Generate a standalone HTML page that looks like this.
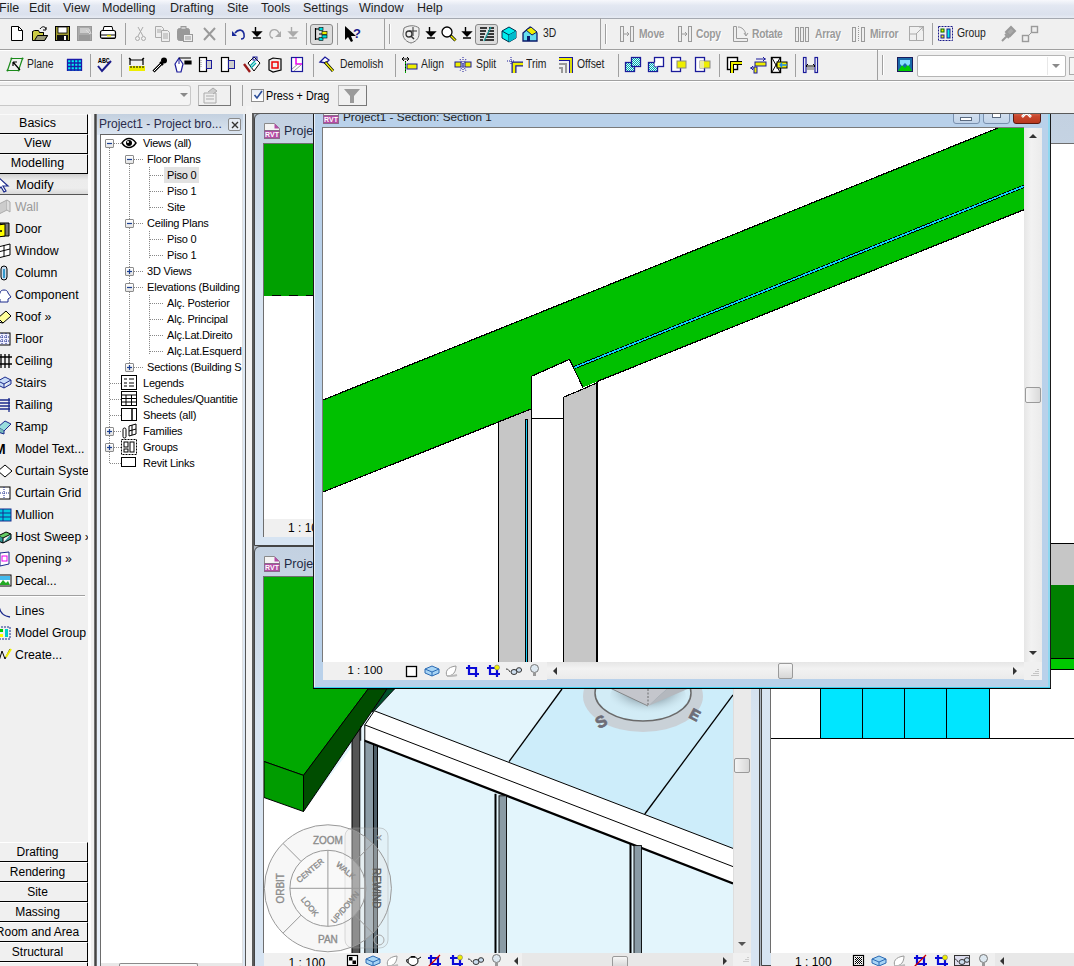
<!DOCTYPE html>
<html><head><meta charset="utf-8">
<style>
*{margin:0;padding:0;box-sizing:border-box}
html,body{width:1074px;height:966px;overflow:hidden;background:#f0f0f0;font-family:"Liberation Sans",sans-serif;font-size:12px;color:#000}
.a{position:absolute}
.t{position:absolute;white-space:nowrap;line-height:1}
svg{overflow:visible}
</style></head><body>
<div class="a" style="left:0px;top:0px;width:1074px;height:18px;background:linear-gradient(#f7f8fc,#e3e8f2 30%,#dbe1ed 80%,#e6eaf3)"></div>
<div class="a" style="left:0px;top:18px;width:1074px;height:1px;background:#a4a8b0"></div>
<div class="t" style="left:-1px;top:1.92px;font-size:12.5px;color:#1e1e1e;">File</div>
<div class="t" style="left:29px;top:1.92px;font-size:12.5px;color:#1e1e1e;">Edit</div>
<div class="t" style="left:63px;top:1.92px;font-size:12.5px;color:#1e1e1e;">View</div>
<div class="t" style="left:102px;top:1.92px;font-size:12.5px;color:#1e1e1e;">Modelling</div>
<div class="t" style="left:170px;top:1.92px;font-size:12.5px;color:#1e1e1e;">Drafting</div>
<div class="t" style="left:227px;top:1.92px;font-size:12.5px;color:#1e1e1e;">Site</div>
<div class="t" style="left:261px;top:1.92px;font-size:12.5px;color:#1e1e1e;">Tools</div>
<div class="t" style="left:303px;top:1.92px;font-size:12.5px;color:#1e1e1e;">Settings</div>
<div class="t" style="left:359px;top:1.92px;font-size:12.5px;color:#1e1e1e;">Window</div>
<div class="t" style="left:417px;top:1.92px;font-size:12.5px;color:#1e1e1e;">Help</div>
<div class="a" style="left:0px;top:19px;width:1074px;height:30px;background:#f0f0f0"></div>
<div class="a" style="left:0px;top:49px;width:1074px;height:1px;background:#a0a0a0"></div>
<div class="a" style="left:0px;top:50px;width:1074px;height:1px;background:#fff"></div>
<div class="a" style="left:0px;top:80px;width:1074px;height:1px;background:#a0a0a0"></div>
<div class="a" style="left:0px;top:81px;width:1074px;height:1px;background:#fff"></div>
<div class="a" style="left:125px;top:23px;width:1px;height:22px;background:#a0a0a0"></div>
<div class="a" style="left:225px;top:23px;width:1px;height:22px;background:#a0a0a0"></div>
<div class="a" style="left:306px;top:23px;width:1px;height:22px;background:#a0a0a0"></div>
<div class="a" style="left:337px;top:23px;width:1px;height:22px;background:#a0a0a0"></div>
<div class="a" style="left:384px;top:18px;width:1px;height:31px;background:#a0a0a0"></div>
<div class="a" style="left:389px;top:24px;width:1px;height:20px;background:#a0a0a0"></div>
<div class="a" style="left:390px;top:24px;width:1px;height:20px;background:#fff"></div>
<div class="a" style="left:600px;top:18px;width:1px;height:31px;background:#a0a0a0"></div>
<div class="a" style="left:605px;top:24px;width:1px;height:20px;background:#a0a0a0"></div>
<div class="a" style="left:606px;top:24px;width:1px;height:20px;background:#fff"></div>
<div class="a" style="left:932px;top:23px;width:1px;height:22px;background:#a0a0a0"></div>
<div class="a" style="left:90px;top:54px;width:1px;height:23px;background:#a0a0a0"></div>
<div class="a" style="left:121px;top:54px;width:1px;height:23px;background:#a0a0a0"></div>
<div class="a" style="left:313px;top:54px;width:1px;height:23px;background:#a0a0a0"></div>
<div class="a" style="left:395px;top:54px;width:1px;height:23px;background:#a0a0a0"></div>
<div class="a" style="left:618px;top:54px;width:1px;height:23px;background:#a0a0a0"></div>
<div class="a" style="left:719px;top:54px;width:1px;height:23px;background:#a0a0a0"></div>
<div class="a" style="left:795px;top:54px;width:1px;height:23px;background:#a0a0a0"></div>
<div class="a" style="left:877px;top:50px;width:1px;height:30px;background:#a0a0a0"></div>
<div class="a" style="left:882px;top:55px;width:1px;height:20px;background:#a0a0a0"></div>
<div class="a" style="left:883px;top:55px;width:1px;height:20px;background:#fff"></div>
<div class="a" style="left:0px;top:85px;width:191px;height:21px;background:#f4f4f4;border:1px solid #c8c8c8;border-left:none;border-radius:0 3px 3px 0"></div>
<svg class="a" style="left:180px;top:93px;" width="8" height="5" viewBox="0 0 8 5"><path d="M0 0h8l-4 4z" fill="#8a8a8a"/></svg>
<div class="a" style="left:198px;top:85px;width:33px;height:22px;background:#f0f0f0;border:1px solid #b8b8b8;border-right-color:#777;border-bottom:2px solid #777"></div>
<div class="a" style="left:242px;top:85px;width:1px;height:21px;background:#a0a0a0"></div>
<div class="a" style="left:251px;top:89px;width:13px;height:13px;background:linear-gradient(#e6ecf5,#fff);border:1px solid #8f8f8f"></div>
<svg class="a" style="left:253px;top:90px;" width="10" height="10" viewBox="0 0 10 10"><path d="M1.5 5l2.5 3l5-7" stroke="#2a4d9a" stroke-width="1.6" fill="none"/></svg>
<div class="t" style="left:266px;top:89.84px;font-size:12px;color:#000;transform:scaleX(0.9);transform-origin:0 0">Press + Drag</div>
<div class="a" style="left:338px;top:85px;width:29px;height:22px;background:#f0f0f0;border:1px solid #b8b8b8;border-right-color:#777;border-bottom:2px solid #777"></div>
<svg class="a" style="left:344px;top:89px;" width="16" height="14" viewBox="0 0 16 14"><path d="M0 0h16l-6 7v7h-4v-7z" fill="#9a9a9a"/></svg>
<svg class="a" style="left:11px;top:26px;" width="16" height="16" viewBox="0 0 16 16"><path d="M0.5 0.5h7l4 4v10h-11z" fill="#fff" stroke="#000"/><path d="M7.5 0.5v4h4" fill="none" stroke="#000"/></svg>
<svg class="a" style="left:32px;top:26px;" width="16" height="16" viewBox="0 0 16 16"><path d="M0.5 5.5h5l1 1h5v3" fill="#ee6" stroke="#000"/><path d="M0.5 14.5v-9l2-1h4l1 2h4v3h4l-3 5z" fill="#cc4" stroke="#000"/><path d="M2.5 14.5l3-5h10l-3 5z" fill="#997" stroke="#000"/><path d="M8 3c2-3 5-3 6 0M14 1v3h-3" fill="none" stroke="#000"/></svg>
<svg class="a" style="left:55px;top:26px;" width="16" height="16" viewBox="0 0 16 16"><rect x="0.5" y="0.5" width="14" height="14" fill="#a09a30" stroke="#000"/><rect x="3" y="1" width="9" height="6" fill="#fff" stroke="#000" stroke-width="0.8"/><rect x="2" y="9" width="11" height="6" fill="#111"/><rect x="9" y="10" width="2" height="4" fill="#fff"/></svg>
<svg class="a" style="left:77px;top:26px;" width="16" height="16" viewBox="0 0 16 16"><rect x="0.5" y="0.5" width="14" height="14" fill="#aaa" stroke="#999"/><rect x="3" y="2" width="9" height="5" fill="#ccc"/><rect x="2" y="9" width="11" height="6" fill="#999"/><path d="M9 4l4 4M12 3l2 5" stroke="#ddd"/></svg>
<svg class="a" style="left:100px;top:26px;" width="16" height="16" viewBox="0 0 16 16"><path d="M4 0.5h8l1 4h-10z" fill="#fff" stroke="#000"/><rect x="0.5" y="4.5" width="15" height="8" rx="2" fill="#fff" stroke="#000" stroke-width="1.2"/><path d="M1 9h14M2 12h12" stroke="#000"/><rect x="7" y="9" width="4" height="1.5" fill="#dd0"/></svg>
<svg class="a" style="left:135px;top:26px;" width="12" height="16" viewBox="0 0 12 16"><circle cx="2.5" cy="12.5" r="2" fill="none" stroke="#aaa"/><circle cx="8.5" cy="12.5" r="2" fill="none" stroke="#aaa"/><path d="M3 10l5-9M8 10l-5-9" stroke="#aaa"/></svg>
<svg class="a" style="left:155px;top:26px;" width="16" height="16" viewBox="0 0 16 16"><path d="M0.5 0.5h6l2 2v9h-8z" fill="#eee" stroke="#aaa"/><path d="M6.5 4.5h6l2 2v9h-8z" fill="#eee" stroke="#aaa"/><path d="M2 4h4M2 6h4M8 8h5M8 10h5M8 12h5" stroke="#aaa"/></svg>
<svg class="a" style="left:177px;top:26px;" width="16" height="16" viewBox="0 0 16 16"><rect x="0.5" y="2.5" width="12" height="12" rx="2" fill="#999" stroke="#999"/><rect x="4" y="0.5" width="5" height="3" fill="#ccc" stroke="#999"/><rect x="6.5" y="8.5" width="9" height="7" fill="#eee" stroke="#999"/><path d="M8 11h6M8 13h6" stroke="#999"/></svg>
<svg class="a" style="left:203px;top:27px;" width="13" height="14" viewBox="0 0 13 14"><path d="M1 13L12 1M1 1l11 12" stroke="#9a9a9a" stroke-width="2"/></svg>
<svg class="a" style="left:232px;top:28px;" width="14" height="12" viewBox="0 0 14 12"><path d="M3 5c3-4 8-4 9 1s-2 5-3 5" fill="none" stroke="#1a2a9a" stroke-width="1.6"/><path d="M0 3l5 5H0z" fill="#1a2a9a"/></svg>
<svg class="a" style="left:253px;top:27px;" width="8" height="13" viewBox="0 0 8 13"><path d="M2.5 0v6M0 5h8l-4 4z M0 11h8" stroke="#000" fill="#000" stroke-width="1.4"/></svg>
<svg class="a" style="left:269px;top:29px;" width="13" height="11" viewBox="0 0 13 11"><path d="M10 4C8-1 2 0 1 4s2 5 3 5" fill="none" stroke="#aaa" stroke-width="1.4"/><path d="M12 2v6H6z" fill="#aaa"/></svg>
<svg class="a" style="left:289px;top:27px;" width="8" height="13" viewBox="0 0 8 13"><path d="M2.5 0v6M0 5h8l-4 4z M0 11h8" stroke="#aaa" fill="#aaa" stroke-width="1.4"/></svg>
<div class="a" style="left:310px;top:24px;width:23px;height:21px;background:#dcdcdc;border:1px solid #888;border-radius:3px"></div>
<svg class="a" style="left:314px;top:27px;" width="14" height="14" viewBox="0 0 14 14"><path d="M1.5 1v12M1.5 2h4M1.5 12h4M5 7h3" stroke="#000" stroke-width="1.2"/><rect x="5" y="0.5" width="4" height="3" fill="#0dd" stroke="#000" stroke-width="0.6"/><rect x="5" y="10.5" width="4" height="3" fill="#0dd" stroke="#000" stroke-width="0.6"/><rect x="8" y="4.5" width="5" height="3" fill="#ee0" stroke="#000" stroke-width="0.6"/><rect x="8" y="8" width="5" height="3" fill="#0dd" stroke="#000" stroke-width="0.6"/></svg>
<svg class="a" style="left:345px;top:26px;" width="16" height="16" viewBox="0 0 16 16"><path d="M0 0v14l3-3 3 5 2-1-2-5h5z" fill="#000"/><text x="8" y="12" font-size="13" font-weight="bold" fill="#1a1a8a" font-family="Liberation Sans">?</text></svg>
<svg class="a" style="left:403px;top:25px;" width="17" height="18" viewBox="0 0 17 18"><path d="M1 3c5-3 11-3 15 0v6c0 5-4 8-8 9c-4-1-8-4-8-9z" fill="#eee" stroke="#777"/><circle cx="6" cy="9" r="3" fill="none" stroke="#333" stroke-width="1.3"/><path d="M8 11l3 3" stroke="#333" stroke-width="1.5"/><path d="M10 2v9M6 6h8" stroke="#333"/></svg>
<svg class="a" style="left:427px;top:27px;" width="8" height="13" viewBox="0 0 8 13"><path d="M2.5 0v6M0 5h8l-4 4z M0 11h8" stroke="#000" fill="#000" stroke-width="1.4"/></svg>
<svg class="a" style="left:441px;top:26px;" width="16" height="16" viewBox="0 0 16 16"><circle cx="6" cy="6" r="5" fill="#fff" stroke="#000" stroke-width="1.3"/><path d="M9.5 9.5l5 5" stroke="#000" stroke-width="3"/><path d="M10 10l4.5 4.5" stroke="#ee0" stroke-width="1.5"/></svg>
<svg class="a" style="left:463px;top:27px;" width="8" height="13" viewBox="0 0 8 13"><path d="M2.5 0v6M0 5h8l-4 4z M0 11h8" stroke="#000" fill="#000" stroke-width="1.4"/></svg>
<div class="a" style="left:475px;top:24px;width:23px;height:21px;background:#dcdcdc;border:1px solid #888;border-radius:3px"></div>
<svg class="a" style="left:480px;top:27px;" width="14" height="14" viewBox="0 0 14 14"><path d="M0 1h7M0 4h6M0 7h5M0 10h4M0 13h3M9 1h5M8 4h6M7 7h7M6 10h8M5 13h9" stroke="#000" stroke-width="1.5"/><path d="M11 0L4 14" stroke="#1a9a9a" stroke-width="1.3"/></svg>
<svg class="a" style="left:501px;top:26px;" width="16" height="16" viewBox="0 0 16 16"><path d="M1 5l7-4 7 4v7l-7 4-7-4z" fill="#0ee" stroke="#002a4a"/><path d="M1 5l7 4 7-4M8 9v7" stroke="#002a4a" fill="none"/><path d="M8 9l7-4v7l-7 4z" fill="#0bc"/></svg>
<svg class="a" style="left:522px;top:26px;" width="16" height="16" viewBox="0 0 16 16"><path d="M8 1l7 6v8H1V7z" fill="#6de" stroke="#0a1a6a" stroke-width="1.3"/><path d="M4 4l5-3 6 5-5 3z" fill="#ee0" stroke="#0a1a6a"/><rect x="5" y="10" width="3" height="5" fill="#0a1a6a"/></svg>
<div class="t" style="left:543px;top:27.42px;font-size:12.5px;color:#1e1e1e;transform:scaleX(0.83);transform-origin:0 0">3D</div>
<svg class="a" style="left:620px;top:26px;" width="14" height="16" viewBox="0 0 14 16"><rect x="0.5" y="0.5" width="3" height="15" fill="#eee" stroke="#9a9a9a"/><rect x="10.5" y="0.5" width="3" height="15" fill="#eee" stroke="#9a9a9a"/><path d="M4 8h5M7 6l2 2-2 2" stroke="#9a9a9a" fill="none"/></svg>
<div class="t" style="left:639px;top:27.84px;font-size:12px;font-weight:bold;color:#9a9a9a;text-shadow:1px 1px 0 #fff;letter-spacing:-0.3px;transform:scaleX(0.86);transform-origin:0 0">Move</div>
<svg class="a" style="left:678px;top:26px;" width="14" height="16" viewBox="0 0 14 16"><rect x="0.5" y="0.5" width="3" height="15" fill="#eee" stroke="#9a9a9a"/><rect x="10.5" y="0.5" width="3" height="15" fill="#eee" stroke="#9a9a9a"/><path d="M4 8h5M7 6l2 2-2 2" stroke="#9a9a9a" fill="none"/></svg>
<div class="t" style="left:696px;top:27.84px;font-size:12px;font-weight:bold;color:#9a9a9a;text-shadow:1px 1px 0 #fff;letter-spacing:-0.3px;transform:scaleX(0.86);transform-origin:0 0">Copy</div>
<svg class="a" style="left:733px;top:26px;" width="16" height="16" viewBox="0 0 16 16"><path d="M0.5 0.5h3v12h11v3h-14z" fill="#eee" stroke="#9a9a9a"/><path d="M5 1c4 0 7 3 8 8M11 7l2 3 2-3" stroke="#9a9a9a" fill="none"/></svg>
<div class="t" style="left:752px;top:27.84px;font-size:12px;font-weight:bold;color:#9a9a9a;text-shadow:1px 1px 0 #fff;letter-spacing:-0.3px;transform:scaleX(0.86);transform-origin:0 0">Rotate</div>
<svg class="a" style="left:795px;top:26px;" width="15" height="16" viewBox="0 0 15 16"><rect x="0.5" y="1.5" width="3" height="14" fill="#eee" stroke="#9a9a9a"/><rect x="5.5" y="1.5" width="3" height="14" fill="#eee" stroke="#9a9a9a"/><rect x="10.5" y="1.5" width="3" height="14" fill="#eee" stroke="#9a9a9a"/></svg>
<div class="t" style="left:815px;top:27.84px;font-size:12px;font-weight:bold;color:#9a9a9a;text-shadow:1px 1px 0 #fff;letter-spacing:-0.3px;transform:scaleX(0.86);transform-origin:0 0">Array</div>
<svg class="a" style="left:852px;top:26px;" width="14" height="16" viewBox="0 0 14 16"><rect x="0.5" y="1.5" width="3" height="14" fill="#eee" stroke="#9a9a9a"/><rect x="9.5" y="1.5" width="3" height="14" fill="#eee" stroke="#9a9a9a"/><path d="M6.5 0v16" stroke="#9a9a9a" stroke-dasharray="1 1"/></svg>
<div class="t" style="left:870px;top:27.84px;font-size:12px;font-weight:bold;color:#9a9a9a;text-shadow:1px 1px 0 #fff;letter-spacing:-0.3px;transform:scaleX(0.86);transform-origin:0 0">Mirror</div>
<svg class="a" style="left:909px;top:26px;" width="16" height="16" viewBox="0 0 16 16"><rect x="0.5" y="0.5" width="14" height="14" fill="none" stroke="#aaa"/><path d="M0.5 8h7v7M7 8l7-7M10 1h4v4" stroke="#aaa" fill="none"/></svg>
<svg class="a" style="left:938px;top:26px;" width="16" height="16" viewBox="0 0 16 16"><rect x="0.5" y="0.5" width="14" height="14" fill="none" stroke="#1a1a8a" stroke-dasharray="2 1"/><rect x="3" y="3" width="3" height="3" fill="#ee0" stroke="#060"/><rect x="3" y="9" width="3" height="3" fill="#ee0" stroke="#1a1a8a"/><rect x="9" y="3" width="3" height="9" fill="#0ee" stroke="#1a1a8a"/></svg>
<div class="t" style="left:957px;top:27.42px;font-size:12.5px;color:#1e1e1e;transform:scaleX(0.83);transform-origin:0 0">Group</div>
<svg class="a" style="left:1001px;top:27px;" width="15" height="15" viewBox="0 0 15 15"><path d="M1 14l5-5M5 5l5-5 4 4-5 5zM4 7l4 4" stroke="#9a9a9a" stroke-width="2" fill="#aaa"/></svg>
<svg class="a" style="left:1022px;top:26px;" width="16" height="16" viewBox="0 0 16 16"><rect x="0.5" y="9.5" width="6" height="6" fill="#eee" stroke="#9a9a9a" stroke-width="1.4"/><rect x="9.5" y="0.5" width="6" height="6" fill="#eee" stroke="#9a9a9a" stroke-width="1.4"/><path d="M6 10l4-4" stroke="#9a9a9a"/></svg>
<svg class="a" style="left:7px;top:57px;" width="16" height="16" viewBox="0 0 16 16"><path d="M4.5 1.5h11l-4 12h-11z" fill="none" stroke="#1a8a1a" stroke-width="1.2"/><circle cx="4.5" cy="1.5" r="1" fill="#1a8a1a"/><circle cx="15.5" cy="1.5" r="1" fill="#1a8a1a"/><circle cx="11.5" cy="13.5" r="1" fill="#1a8a1a"/><circle cx="0.5" cy="13.5" r="1" fill="#1a8a1a"/><path d="M6 5l7 8M6 5v4M6 5h4" stroke="#000" stroke-width="1.2" fill="none"/></svg>
<div class="t" style="left:27px;top:58.42px;font-size:12.5px;color:#1e1e1e;transform:scaleX(0.83);transform-origin:0 0">Plane</div>
<svg class="a" style="left:67px;top:59px;" width="15" height="12" viewBox="0 0 15 12"><rect x="0" y="0" width="15" height="12" fill="#0ee"/><path d="M0.5 0v12M4 0v12M7.5 0v12M11 0v12M14.5 0v12M0 0.5h15M0 4h15M0 7.5h15M0 11h15" stroke="#1a1aaa" stroke-width="1.3"/></svg>
<svg class="a" style="left:97px;top:57px;" width="16" height="16" viewBox="0 0 16 16"><text x="1" y="6" font-size="6.5" font-weight="bold" font-family="Liberation Mono" fill="#000">ABC</text><path d="M1 9l4 5 9-10" stroke="#1a1a8a" stroke-width="2" fill="none"/></svg>
<svg class="a" style="left:129px;top:57px;" width="16" height="16" viewBox="0 0 16 16"><path d="M1 1v7M14 1v7M1 3h13M0 1l2 2M15 1l-2 2" stroke="#000" stroke-width="1.2"/><rect x="0" y="9" width="16" height="5" fill="#ee0"/><path d="M2 9v2M5 9v2M8 9v2M11 9v2M14 9v2" stroke="#000"/></svg>
<svg class="a" style="left:152px;top:57px;" width="16" height="16" viewBox="0 0 16 16"><path d="M1.5 14.5l9-9" stroke="#000" stroke-width="3"/><path d="M2 14l8.5-8.5" stroke="#fff" stroke-width="1"/><circle cx="12" cy="3.5" r="3" fill="#000"/><path d="M8 5l3 3" stroke="#000" stroke-width="2"/></svg>
<svg class="a" style="left:175px;top:57px;" width="16" height="16" viewBox="0 0 16 16"><path d="M4 1l4 6-2 8H2L0 7z" fill="#fff" stroke="#1a1a9a" stroke-width="1.2"/><path d="M4 1v6" stroke="#1a1a9a"/><path d="M4 1h12M10 4h6v3h-6z" stroke="#000" fill="#000" stroke-width="1.2"/></svg>
<svg class="a" style="left:199px;top:57px;" width="14" height="16" viewBox="0 0 14 16"><rect x="0.5" y="0.5" width="7" height="14" fill="#fff" stroke="#000" stroke-width="1.2"/><rect x="7.5" y="3.5" width="5" height="8" fill="#ccc" stroke="#1a1a9a"/><path d="M2 3v8" stroke="#888" stroke-dasharray="1 1"/></svg>
<svg class="a" style="left:221px;top:57px;" width="15" height="16" viewBox="0 0 15 16"><rect x="0.5" y="0.5" width="7" height="14" fill="#fff" stroke="#000" stroke-width="1.2"/><rect x="7.5" y="3.5" width="6" height="8" fill="#ccc" stroke="#1a1a9a"/></svg>
<svg class="a" style="left:244px;top:57px;" width="16" height="16" viewBox="0 0 16 16"><path d="M0 7l6 8" stroke="#9a1a1a" stroke-width="2.4"/><path d="M4 6l6-6 6 6-6 8z" fill="#fff" stroke="#000"/><path d="M6 9l5-5M7 11l5-5" stroke="#0aa" stroke-width="1.3"/><rect x="9" y="0" width="4" height="3" fill="none" stroke="#1a1a9a"/></svg>
<svg class="a" style="left:267px;top:57px;" width="15" height="16" viewBox="0 0 15 16"><path d="M2 3l4-2 8 1v11l-8 2-4-2z" fill="#eee" stroke="#000" stroke-width="1.2"/><rect x="5" y="5" width="6" height="6" fill="none" stroke="#e00" stroke-width="1.5"/></svg>
<svg class="a" style="left:291px;top:57px;" width="13" height="16" viewBox="0 0 13 16"><rect x="0.5" y="0.5" width="11" height="14" fill="#fff" stroke="#1a1a9a" stroke-width="1.2"/><path d="M5 1v6h6" stroke="#e0e" stroke-width="1.5" fill="none"/><path d="M1 12l6-5M3 14l7-6" stroke="#999"/></svg>
<svg class="a" style="left:319px;top:57px;" width="16" height="16" viewBox="0 0 16 16"><path d="M1 5l5-5 4 3-3 3z" fill="#fff" stroke="#1a1a9a" stroke-width="1.3"/><path d="M6 5l8 9" stroke="#000" stroke-width="3"/><path d="M6.5 5.5l7.5 8.5" stroke="#ee0" stroke-width="1.5"/></svg>
<div class="t" style="left:339.5px;top:58.42px;font-size:12.5px;color:#1e1e1e;transform:scaleX(0.83);transform-origin:0 0">Demolish</div>
<svg class="a" style="left:402px;top:57px;" width="16" height="16" viewBox="0 0 16 16"><path d="M0 2h7M2 0l-2 2 2 2M5 0l2 2-2 2M3.5 4v12" stroke="#000" fill="none"/><path d="M3.5 5v11" stroke="#0a0" stroke-dasharray="2 1"/><rect x="5" y="7" width="10" height="5" fill="#ee0" stroke="#1a1a9a"/></svg>
<div class="t" style="left:421px;top:58.42px;font-size:12.5px;color:#1e1e1e;transform:scaleX(0.83);transform-origin:0 0">Align</div>
<svg class="a" style="left:455px;top:57px;" width="16" height="16" viewBox="0 0 16 16"><rect x="0" y="5" width="6" height="5" fill="#ee0" stroke="#1a1a9a"/><rect x="10" y="5" width="6" height="5" fill="#ee0" stroke="#1a1a9a"/><path d="M8 0v16M5 2l6 12M11 2L5 14" stroke="#1a1a9a" stroke-dasharray="1 1"/></svg>
<div class="t" style="left:475.5px;top:58.42px;font-size:12.5px;color:#1e1e1e;transform:scaleX(0.83);transform-origin:0 0">Split</div>
<svg class="a" style="left:507px;top:57px;" width="16" height="16" viewBox="0 0 16 16"><path d="M0 4h8M4 0v8" stroke="#1a1a9a" stroke-dasharray="1 1"/><path d="M7 16V7h9" stroke="#1a1a9a" stroke-width="5" fill="none"/><path d="M7 16V7h9" stroke="#ee0" stroke-width="2.5" fill="none"/></svg>
<div class="t" style="left:526px;top:58.42px;font-size:12.5px;color:#1e1e1e;transform:scaleX(0.83);transform-origin:0 0">Trim</div>
<svg class="a" style="left:558px;top:57px;" width="15" height="16" viewBox="0 0 15 16"><path d="M1 7h7v9M1 11h3v5" stroke="#999" stroke-width="2" fill="none"/><path d="M1 2h12v14" stroke="#1a1a9a" stroke-width="4" fill="none"/><path d="M1 2h12v14" stroke="#ee0" stroke-width="1.8" fill="none"/></svg>
<div class="t" style="left:577px;top:58.42px;font-size:12.5px;color:#1e1e1e;transform:scaleX(0.83);transform-origin:0 0">Offset</div>
<svg class="a" style="left:625px;top:57px;" width="16" height="16" viewBox="0 0 16 16"><defs><pattern id="hp" width="2" height="2" patternUnits="userSpaceOnUse"><rect width="2" height="2" fill="#0aa"/><rect width="1" height="1" fill="#dff"/><rect x="1" y="1" width="1" height="1" fill="#dff"/></pattern></defs><rect x="0.5" y="5.5" width="9" height="9" fill="url(#hp)" stroke="#1a1a9a" stroke-width="1.3"/><rect x="6.5" y="0.5" width="9" height="9" fill="url(#hp)" stroke="#1a1a9a" stroke-width="1.3"/></svg>
<svg class="a" style="left:648px;top:57px;" width="16" height="16" viewBox="0 0 16 16"><rect x="0.5" y="5.5" width="9" height="9" fill="url(#hp)" stroke="#1a1a9a" stroke-width="1.3"/><rect x="6.5" y="0.5" width="9" height="9" fill="#fff" stroke="#1a1a9a" stroke-width="1.3"/><rect x="6.5" y="5.5" width="3" height="4" fill="#fff"/></svg>
<svg class="a" style="left:671px;top:57px;" width="16" height="16" viewBox="0 0 16 16"><rect x="0.5" y="0.5" width="9" height="14" fill="#fff" stroke="#1a1a9a" stroke-width="1.3"/><rect x="6" y="4" width="9" height="7" fill="#ee0" stroke="#888"/></svg>
<svg class="a" style="left:695px;top:57px;" width="16" height="16" viewBox="0 0 16 16"><rect x="0.5" y="0.5" width="9" height="14" fill="#fff" stroke="#1a1a9a" stroke-width="1.3"/><rect x="5" y="4" width="10" height="7" fill="#ee0" stroke="#888"/><rect x="5" y="4" width="4" height="7" fill="#ee9"/></svg>
<svg class="a" style="left:727px;top:57px;" width="16" height="16" viewBox="0 0 16 16"><rect x="0.5" y="0.5" width="10" height="12" fill="#fff" stroke="#000" stroke-width="1.4"/><path d="M5 16V6h10" stroke="#000" stroke-width="4" fill="none"/><path d="M5 16V6h10" stroke="#ee0" stroke-width="2" fill="none"/></svg>
<svg class="a" style="left:750px;top:57px;" width="16" height="16" viewBox="0 0 16 16"><path d="M6 2h10M13 0l2 2-2 2" stroke="#1a1a9a" fill="none"/><rect x="5" y="5" width="11" height="4" fill="#ee0" stroke="#1a1a9a"/><path d="M0 11h6M3 9l-2 2 2 2" stroke="#1a1a9a" fill="none"/><rect x="4" y="10" width="3" height="6" fill="#ee0" stroke="#1a1a9a"/></svg>
<svg class="a" style="left:771px;top:57px;" width="16" height="16" viewBox="0 0 16 16"><rect x="0.5" y="0.5" width="9" height="15" fill="#fff" stroke="#000" stroke-width="1.4"/><path d="M1 1l8 14M9 1L1 15" stroke="#000"/><rect x="6" y="5" width="10" height="6" fill="#ee0" stroke="#000"/><path d="M16 8H9M11 6l-2 2 2 2" stroke="#1a8aee" stroke-width="1.3" fill="none"/></svg>
<svg class="a" style="left:803px;top:57px;" width="15" height="16" viewBox="0 0 15 16"><rect x="0.5" y="0.5" width="2.5" height="15" fill="#fff" stroke="#1a1a9a" stroke-width="1.2"/><rect x="12" y="0.5" width="2.5" height="15" fill="#fff" stroke="#1a1a9a" stroke-width="1.2"/><path d="M3 9h9M5 7l-2 2 2 2M10 7l2 2-2 2" stroke="#000" fill="none"/><rect x="4" y="10" width="7" height="3" fill="#aaa"/></svg>
<svg class="a" style="left:897px;top:57px;" width="16" height="16" viewBox="0 0 16 16"><rect x="0.5" y="0.5" width="15" height="14" fill="#1a6aaa" stroke="#1a1a5a"/><path d="M1 14l4-6 3 3 3-4 4 7z" fill="#0c0"/><path d="M3 3h10v4l-2 2-3-3-3 3-2-2z" fill="#8df"/></svg>
<div class="a" style="left:917px;top:55px;width:149px;height:22px;background:#fff;border:1px solid #b5b5b5;border-radius:2px"></div>
<div class="a" style="left:1047px;top:57px;width:1px;height:18px;background:#e8e8e8"></div>
<svg class="a" style="left:1052px;top:64px;" width="8" height="5" viewBox="0 0 8 5"><path d="M0 0h8l-4 4z" fill="#8a8a8a"/></svg>
<div class="a" style="left:1069px;top:57px;width:8px;height:18px;background:#f4f4f4;border:1px solid #aaa"></div>
<div class="a" style="left:199px;top:90px;width:24px;height:12px;background:transparent"></div>
<svg class="a" style="left:203px;top:88px;" width="16" height="16" viewBox="0 0 16 16"><path d="M1 5h12v10H1z" fill="#eee" stroke="#aaa"/><path d="M3 8h8M3 11h8" stroke="#aaa"/><path d="M5 4l5-4 4 3-4 3" fill="#ccc" stroke="#aaa"/></svg>
<div class="a" style="left:0px;top:106px;width:1074px;height:8px;background:#f0f0f0"></div>
<div class="a" style="left:0px;top:114px;width:88px;height:20px;background:#f0f0f0;border-top:1px solid #fafafa;border-right:1px solid #000;border-bottom:1px solid #000"></div>
<div class="t" style="left:-12.5px;width:100px;text-align:center;top:117.42px;font-size:12.5px">Basics</div>
<div class="a" style="left:0px;top:134px;width:88px;height:20px;background:#f0f0f0;border-top:1px solid #fafafa;border-right:1px solid #000;border-bottom:1px solid #000"></div>
<div class="t" style="left:-12.5px;width:100px;text-align:center;top:137.42px;font-size:12.5px">View</div>
<div class="a" style="left:0px;top:154px;width:88px;height:20px;background:#f0f0f0;border-top:1px solid #fafafa;border-right:1px solid #000;border-bottom:1px solid #000"></div>
<div class="t" style="left:-12.5px;width:100px;text-align:center;top:157.42px;font-size:12.5px">Modelling</div>
<div class="a" style="left:0px;top:174px;width:88px;height:21px;background:linear-gradient(#cfcfcf,#ececec 30%,#ededed 70%,#d9d9d9);border-bottom:1px solid #555"></div>
<div class="t" style="left:16px;top:179.36px;font-size:12.8px;color:#000;">Modify</div>
<svg class="a" style="left:-3px;top:176px;" width="12" height="16" viewBox="0 0 12 16"><path d="M1 1v13l3-3 3 5 2-1-3-5h5z" fill="#fff" stroke="#1b2a8c" stroke-width="1.2"/></svg>
<div class="a" style="left:0;top:195px;width:88px;height:470px;overflow:hidden"><div class="a" style="left:0;top:-195px;width:1074px;height:966px">
<div class="t" style="left:15px;top:201.09px;font-size:12.3px;color:#9a9a9a;">Wall</div>
<div class="t" style="left:15px;top:223.09px;font-size:12.3px;color:#000;">Door</div>
<div class="t" style="left:15px;top:245.09px;font-size:12.3px;color:#000;">Window</div>
<div class="t" style="left:15px;top:267.09px;font-size:12.3px;color:#000;">Column</div>
<div class="t" style="left:15px;top:289.09px;font-size:12.3px;color:#000;">Component</div>
<div class="t" style="left:15px;top:311.09px;font-size:12.3px;color:#000;">Roof &raquo;</div>
<div class="t" style="left:15px;top:333.09px;font-size:12.3px;color:#000;">Floor</div>
<div class="t" style="left:15px;top:355.09px;font-size:12.3px;color:#000;">Ceiling</div>
<div class="t" style="left:15px;top:377.09px;font-size:12.3px;color:#000;">Stairs</div>
<div class="t" style="left:15px;top:399.09px;font-size:12.3px;color:#000;">Railing</div>
<div class="t" style="left:15px;top:421.09px;font-size:12.3px;color:#000;">Ramp</div>
<div class="t" style="left:15px;top:443.09px;font-size:12.3px;color:#000;">Model Text...</div>
<div class="t" style="left:15px;top:465.09px;font-size:12.3px;color:#000;">Curtain Syster</div>
<div class="t" style="left:15px;top:487.09px;font-size:12.3px;color:#000;">Curtain Grid</div>
<div class="t" style="left:15px;top:509.09px;font-size:12.3px;color:#000;">Mullion</div>
<div class="t" style="left:15px;top:531.09px;font-size:12.3px;color:#000;">Host Sweep &raquo;</div>
<div class="t" style="left:15px;top:553.09px;font-size:12.3px;color:#000;">Opening &raquo;</div>
<div class="t" style="left:15px;top:575.09px;font-size:12.3px;color:#000;">Decal...</div>
</div></div>
<div class="a" style="left:0px;top:595px;width:85px;height:1px;background:#a0a0a0"></div>
<div class="a" style="left:0px;top:596px;width:85px;height:1px;background:#fff"></div>
<div class="t" style="left:15px;top:605.09px;font-size:12.3px;color:#000;">Lines</div>
<div class="t" style="left:15px;top:627.09px;font-size:12.3px;color:#000;">Model Group</div>
<div class="t" style="left:15px;top:649.09px;font-size:12.3px;color:#000;">Create...</div>
<svg class="a" style="left:-2px;top:199px;" width="14" height="16" viewBox="0 0 14 16"><path d="M1 5l8-4v10l-8 4z" fill="#ccc" stroke="#aaa"/><path d="M9 1l3 2v10l-3-2" fill="#ddd" stroke="#aaa"/></svg>
<svg class="a" style="left:-2px;top:221px;" width="14" height="16" viewBox="0 0 14 16"><path d="M2 2h9v13h-9z" fill="#777" stroke="#000"/><path d="M0 4l7-1v12l-7 1z" fill="#ff0" stroke="#000"/><circle cx="3" cy="10" r="1" fill="#000"/></svg>
<svg class="a" style="left:-2px;top:243px;" width="14" height="16" viewBox="0 0 14 16"><path d="M0 4l12-3v11l-12 3z" fill="#fff" stroke="#000"/><path d="M6 2v12M0 9l12-3" stroke="#000"/></svg>
<svg class="a" style="left:-2px;top:265px;" width="14" height="16" viewBox="0 0 14 16"><rect x="3" y="1" width="6" height="14" rx="3" fill="#cde" stroke="#000"/><rect x="5" y="4" width="2" height="9" fill="#39c"/></svg>
<svg class="a" style="left:-2px;top:287px;" width="14" height="16" viewBox="0 0 14 16"><path d="M2 6c0-4 8-4 8 0l3 4-3 2v3H2v-3l-2-2z" fill="#fff" stroke="#1b2a8c"/></svg>
<svg class="a" style="left:-2px;top:309px;" width="14" height="16" viewBox="0 0 14 16"><path d="M0 9l8-7 5 5-8 7z" fill="#ff9" stroke="#000"/><path d="M0 9v4l5 1" fill="none" stroke="#000"/></svg>
<svg class="a" style="left:-2px;top:331px;" width="14" height="16" viewBox="0 0 14 16"><rect x="0" y="2" width="12" height="12" fill="#eef" stroke="#000"/><path d="M0 6h12M0 10h12M4 2v12M8 2v12" stroke="#1b2a8c" stroke-dasharray="1 1"/></svg>
<svg class="a" style="left:-2px;top:353px;" width="14" height="16" viewBox="0 0 14 16"><path d="M0 4h14M0 11h14M3 1v14M7 1v14M11 1v14" stroke="#000" stroke-width="1.3"/></svg>
<svg class="a" style="left:-2px;top:375px;" width="14" height="16" viewBox="0 0 14 16"><path d="M0 6l7-4 6 3-7 4zM0 6v4l6 3v-4M6 13l7-4V5" fill="#c8dcf8" stroke="#1b2a8c"/></svg>
<svg class="a" style="left:-2px;top:397px;" width="14" height="16" viewBox="0 0 14 16"><path d="M0 3h12M0 6h12M0 9h12M0 12h12M11 1v14" stroke="#1b2a8c" stroke-width="1.3"/></svg>
<svg class="a" style="left:-2px;top:419px;" width="14" height="16" viewBox="0 0 14 16"><path d="M0 8l7-6 6 3-7 7z" fill="#9dd" stroke="#1b2a8c"/><path d="M0 8v5l6 2v-3" fill="#7bb" stroke="#1b2a8c"/></svg>
<svg class="a" style="left:-2px;top:441px;" width="14" height="16" viewBox="0 0 14 16"><text x="-4" y="13" font-size="14" font-family="Liberation Sans" font-weight="bold">M</text></svg>
<svg class="a" style="left:-2px;top:463px;" width="14" height="16" viewBox="0 0 14 16"><path d="M0 8l7-6 7 6-7 6z" fill="#fff" stroke="#000"/></svg>
<svg class="a" style="left:-2px;top:485px;" width="14" height="16" viewBox="0 0 14 16"><rect x="0" y="2" width="12" height="12" fill="#fff" stroke="#000"/><path d="M0 8h12M6 2v12" stroke="#1b2a8c" stroke-dasharray="1 1"/></svg>
<svg class="a" style="left:-2px;top:507px;" width="14" height="16" viewBox="0 0 14 16"><rect x="0" y="2" width="13" height="12" fill="#00c8e0" stroke="#1b2a8c"/><path d="M0 6h13M0 10h13M5 2v12" stroke="#1b2a8c"/></svg>
<svg class="a" style="left:-2px;top:529px;" width="14" height="16" viewBox="0 0 14 16"><path d="M0 7l8-4 5 2-8 4z" fill="#6c6" stroke="#000"/><path d="M0 7v5l5 2v-5M5 14l8-4V5" fill="#399" stroke="#000"/></svg>
<svg class="a" style="left:-2px;top:551px;" width="14" height="16" viewBox="0 0 14 16"><path d="M2 2l9-1v12l-9 2z" fill="#fff" stroke="#1b2a8c"/><rect x="4" y="5" width="5" height="5" fill="none" stroke="#e0e"/></svg>
<svg class="a" style="left:-2px;top:573px;" width="14" height="16" viewBox="0 0 14 16"><rect x="0" y="2" width="13" height="11" fill="#fff" stroke="#000"/><path d="M1 12l4-5 3 3 2-2 2 4z" fill="#2a2"/><rect x="1" y="3" width="11" height="4" fill="#4be"/></svg>
<svg class="a" style="left:-2px;top:603px;" width="14" height="16" viewBox="0 0 14 16"><path d="M1 1c0 8 4 12 11 13" fill="none" stroke="#1b2a8c" stroke-width="1.3"/></svg>
<svg class="a" style="left:-2px;top:625px;" width="14" height="16" viewBox="0 0 14 16"><rect x="0" y="2" width="12" height="12" fill="none" stroke="#1b2a8c" stroke-dasharray="2 1"/><rect x="2" y="4" width="3" height="3" fill="#0c0"/><rect x="2" y="9" width="3" height="3" fill="#ff0"/><rect x="7" y="4" width="3" height="8" fill="#0cc"/></svg>
<svg class="a" style="left:-2px;top:647px;" width="14" height="16" viewBox="0 0 14 16"><path d="M1 14l3-10 3 8 5-10" fill="none" stroke="#000"/><path d="M8 10l5-8" stroke="#ee0" stroke-width="2"/></svg>
<div class="a" style="left:0px;top:842px;width:88px;height:20px;background:#f0f0f0;border-top:1px solid #fff;border-right:1px solid #000;border-bottom:1px solid #000"></div>
<div class="t" style="left:-12.5px;width:100px;text-align:center;top:845.84px;font-size:12px">Drafting</div>
<div class="a" style="left:0px;top:862px;width:88px;height:20px;background:#f0f0f0;border-top:1px solid #fff;border-right:1px solid #000;border-bottom:1px solid #000"></div>
<div class="t" style="left:-12.5px;width:100px;text-align:center;top:865.84px;font-size:12px">Rendering</div>
<div class="a" style="left:0px;top:882px;width:88px;height:20px;background:#f0f0f0;border-top:1px solid #fff;border-right:1px solid #000;border-bottom:1px solid #000"></div>
<div class="t" style="left:-12.5px;width:100px;text-align:center;top:885.84px;font-size:12px">Site</div>
<div class="a" style="left:0px;top:902px;width:88px;height:20px;background:#f0f0f0;border-top:1px solid #fff;border-right:1px solid #000;border-bottom:1px solid #000"></div>
<div class="t" style="left:-12.5px;width:100px;text-align:center;top:905.84px;font-size:12px">Massing</div>
<div class="a" style="left:0px;top:922px;width:88px;height:20px;background:#f0f0f0;border-top:1px solid #fff;border-right:1px solid #000;border-bottom:1px solid #000"></div>
<div class="t" style="left:-12.5px;width:100px;text-align:center;top:925.84px;font-size:12px">Room and Area</div>
<div class="a" style="left:0px;top:942px;width:88px;height:20px;background:#f0f0f0;border-top:1px solid #fff;border-right:1px solid #000;border-bottom:1px solid #000"></div>
<div class="t" style="left:-12.5px;width:100px;text-align:center;top:945.84px;font-size:12px">Structural</div>
<div class="a" style="left:0px;top:962px;width:88px;height:5px;background:#f0f0f0;border-top:1px solid #fff;border-right:1px solid #000"></div>
<div class="a" style="left:88px;top:114px;width:3px;height:852px;background:#fdfdfd"></div>
<div class="a" style="left:94px;top:114px;width:3px;height:852px;background:linear-gradient(90deg,#888,#444,#888)"></div>
<div class="a" style="left:97px;top:114px;width:3px;height:852px;background:#e8f0fa"></div>
<div class="a" style="left:100px;top:134px;width:1px;height:832px;background:#6d6d6d"></div>
<div class="a" style="left:97px;top:114px;width:148px;height:21px;background:linear-gradient(#c3d0df,#dce6f2)"></div>
<div class="t" style="left:99px;top:118.14px;font-size:12px;color:#2b2b4b;">Project1 - Project bro...</div>
<div class="a" style="left:228px;top:118px;width:13px;height:13px;background:#e6ecf4;border:1px solid #8a8a8a;border-radius:2px"></div>
<svg class="a" style="left:231.5px;top:121.5px;" width="6" height="6" viewBox="0 0 6 6"><path d="M0 0l6 6M6 0l-6 6" stroke="#333" stroke-width="1.4"/></svg>
<div class="a" style="left:101px;top:134px;width:141px;height:832px;background:#fff"></div>
<div class="a" style="left:100px;top:134px;width:142px;height:1px;background:#646464"></div>
<div class="a" style="left:242px;top:134px;width:1px;height:832px;background:#e0e0e0"></div>
<div class="a" style="left:243px;top:114px;width:2px;height:852px;background:#dde8f4"></div>
<div class="a" style="left:245px;top:114px;width:1px;height:852px;background:#555"></div>
<div class="a" style="left:246px;top:106px;width:6px;height:860px;background:#f3f3f3"></div>
<div class="a" style="left:101px;top:135px;width:141px;height:831px;overflow:hidden"><div class="a" style="left:-101px;top:-135px;width:1074px;height:966px">
<div class="a" style="left:109px;top:148px;width:1px;height:315px;background:repeating-linear-gradient(#888 0 1px,transparent 1px 2px)"></div>
<div class="a" style="left:129px;top:164px;width:1px;height:203px;background:repeating-linear-gradient(#888 0 1px,transparent 1px 2px)"></div>
<div class="a" style="left:149px;top:167px;width:1px;height:44px;background:repeating-linear-gradient(#888 0 1px,transparent 1px 2px)"></div>
<div class="a" style="left:149px;top:231px;width:1px;height:28px;background:repeating-linear-gradient(#888 0 1px,transparent 1px 2px)"></div>
<div class="a" style="left:149px;top:295px;width:1px;height:60px;background:repeating-linear-gradient(#888 0 1px,transparent 1px 2px)"></div>
<div class="a" style="left:164px;top:167px;width:35px;height:16px;background:#e2e2e2"></div>
<div class="a" style="left:105px;top:139px;width:9px;height:9px;background:linear-gradient(#fff,#e4e4e4);border:1px solid #8c8c8c;border-radius:1px"></div>
<svg class="a" style="left:107px;top:141px;" width="5" height="5" viewBox="0 0 5 5"><path d="M0 2.5h5" stroke="#1b3f91" stroke-width="1.2"/></svg>
<div class="a" style="left:114px;top:143px;width:7px;height:1px;background:repeating-linear-gradient(90deg,#888 0 1px,transparent 1px 2px)"></div>
<div class="t" style="left:143px;top:137.69px;font-size:11px;color:#000;letter-spacing:-0.2px">Views (all)</div>
<div class="a" style="left:125px;top:155px;width:9px;height:9px;background:linear-gradient(#fff,#e4e4e4);border:1px solid #8c8c8c;border-radius:1px"></div>
<svg class="a" style="left:127px;top:157px;" width="5" height="5" viewBox="0 0 5 5"><path d="M0 2.5h5" stroke="#1b3f91" stroke-width="1.2"/></svg>
<div class="a" style="left:134px;top:159px;width:10px;height:1px;background:repeating-linear-gradient(90deg,#888 0 1px,transparent 1px 2px)"></div>
<div class="t" style="left:147px;top:153.69px;font-size:11px;color:#000;letter-spacing:-0.2px">Floor Plans</div>
<div class="a" style="left:150px;top:175px;width:14px;height:1px;background:repeating-linear-gradient(90deg,#888 0 1px,transparent 1px 2px)"></div>
<div class="t" style="left:167px;top:169.69px;font-size:11px;color:#000;letter-spacing:-0.2px">Piso 0</div>
<div class="a" style="left:150px;top:191px;width:14px;height:1px;background:repeating-linear-gradient(90deg,#888 0 1px,transparent 1px 2px)"></div>
<div class="t" style="left:167px;top:185.69px;font-size:11px;color:#000;letter-spacing:-0.2px">Piso 1</div>
<div class="a" style="left:150px;top:207px;width:14px;height:1px;background:repeating-linear-gradient(90deg,#888 0 1px,transparent 1px 2px)"></div>
<div class="t" style="left:167px;top:201.69px;font-size:11px;color:#000;letter-spacing:-0.2px">Site</div>
<div class="a" style="left:125px;top:219px;width:9px;height:9px;background:linear-gradient(#fff,#e4e4e4);border:1px solid #8c8c8c;border-radius:1px"></div>
<svg class="a" style="left:127px;top:221px;" width="5" height="5" viewBox="0 0 5 5"><path d="M0 2.5h5" stroke="#1b3f91" stroke-width="1.2"/></svg>
<div class="a" style="left:134px;top:223px;width:10px;height:1px;background:repeating-linear-gradient(90deg,#888 0 1px,transparent 1px 2px)"></div>
<div class="t" style="left:147px;top:217.69px;font-size:11px;color:#000;letter-spacing:-0.2px">Ceiling Plans</div>
<div class="a" style="left:150px;top:239px;width:14px;height:1px;background:repeating-linear-gradient(90deg,#888 0 1px,transparent 1px 2px)"></div>
<div class="t" style="left:167px;top:233.69px;font-size:11px;color:#000;letter-spacing:-0.2px">Piso 0</div>
<div class="a" style="left:150px;top:255px;width:14px;height:1px;background:repeating-linear-gradient(90deg,#888 0 1px,transparent 1px 2px)"></div>
<div class="t" style="left:167px;top:249.69px;font-size:11px;color:#000;letter-spacing:-0.2px">Piso 1</div>
<div class="a" style="left:125px;top:267px;width:9px;height:9px;background:linear-gradient(#fff,#e4e4e4);border:1px solid #8c8c8c;border-radius:1px"></div>
<svg class="a" style="left:127px;top:269px;" width="5" height="5" viewBox="0 0 5 5"><path d="M0 2.5h5" stroke="#1b3f91" stroke-width="1.2"/><path d="M2.5 0v5" stroke="#1b3f91" stroke-width="1.2"/></svg>
<div class="a" style="left:134px;top:271px;width:10px;height:1px;background:repeating-linear-gradient(90deg,#888 0 1px,transparent 1px 2px)"></div>
<div class="t" style="left:147px;top:265.69px;font-size:11px;color:#000;letter-spacing:-0.2px">3D Views</div>
<div class="a" style="left:125px;top:283px;width:9px;height:9px;background:linear-gradient(#fff,#e4e4e4);border:1px solid #8c8c8c;border-radius:1px"></div>
<svg class="a" style="left:127px;top:285px;" width="5" height="5" viewBox="0 0 5 5"><path d="M0 2.5h5" stroke="#1b3f91" stroke-width="1.2"/></svg>
<div class="a" style="left:134px;top:287px;width:10px;height:1px;background:repeating-linear-gradient(90deg,#888 0 1px,transparent 1px 2px)"></div>
<div class="t" style="left:147px;top:281.69px;font-size:11px;color:#000;letter-spacing:-0.2px">Elevations (Building</div>
<div class="a" style="left:150px;top:303px;width:14px;height:1px;background:repeating-linear-gradient(90deg,#888 0 1px,transparent 1px 2px)"></div>
<div class="t" style="left:167px;top:297.69px;font-size:11px;color:#000;letter-spacing:-0.2px">Al&ccedil;. Posterior</div>
<div class="a" style="left:150px;top:319px;width:14px;height:1px;background:repeating-linear-gradient(90deg,#888 0 1px,transparent 1px 2px)"></div>
<div class="t" style="left:167px;top:313.69px;font-size:11px;color:#000;letter-spacing:-0.2px">Al&ccedil;. Principal</div>
<div class="a" style="left:150px;top:335px;width:14px;height:1px;background:repeating-linear-gradient(90deg,#888 0 1px,transparent 1px 2px)"></div>
<div class="t" style="left:167px;top:329.69px;font-size:11px;color:#000;letter-spacing:-0.2px">Al&ccedil;.Lat.Direito</div>
<div class="a" style="left:150px;top:351px;width:14px;height:1px;background:repeating-linear-gradient(90deg,#888 0 1px,transparent 1px 2px)"></div>
<div class="t" style="left:167px;top:345.69px;font-size:11px;color:#000;letter-spacing:-0.2px">Al&ccedil;.Lat.Esquerd</div>
<div class="a" style="left:125px;top:363px;width:9px;height:9px;background:linear-gradient(#fff,#e4e4e4);border:1px solid #8c8c8c;border-radius:1px"></div>
<svg class="a" style="left:127px;top:365px;" width="5" height="5" viewBox="0 0 5 5"><path d="M0 2.5h5" stroke="#1b3f91" stroke-width="1.2"/><path d="M2.5 0v5" stroke="#1b3f91" stroke-width="1.2"/></svg>
<div class="a" style="left:134px;top:367px;width:10px;height:1px;background:repeating-linear-gradient(90deg,#888 0 1px,transparent 1px 2px)"></div>
<div class="t" style="left:147px;top:361.69px;font-size:11px;color:#000;letter-spacing:-0.2px">Sections (Building S</div>
<div class="a" style="left:110px;top:383px;width:11px;height:1px;background:repeating-linear-gradient(90deg,#888 0 1px,transparent 1px 2px)"></div>
<div class="t" style="left:143px;top:377.69px;font-size:11px;color:#000;letter-spacing:-0.2px">Legends</div>
<div class="a" style="left:110px;top:399px;width:11px;height:1px;background:repeating-linear-gradient(90deg,#888 0 1px,transparent 1px 2px)"></div>
<div class="t" style="left:143px;top:393.69px;font-size:11px;color:#000;letter-spacing:-0.2px">Schedules/Quantitie</div>
<div class="a" style="left:110px;top:415px;width:11px;height:1px;background:repeating-linear-gradient(90deg,#888 0 1px,transparent 1px 2px)"></div>
<div class="t" style="left:143px;top:409.69px;font-size:11px;color:#000;letter-spacing:-0.2px">Sheets (all)</div>
<div class="a" style="left:105px;top:427px;width:9px;height:9px;background:linear-gradient(#fff,#e4e4e4);border:1px solid #8c8c8c;border-radius:1px"></div>
<svg class="a" style="left:107px;top:429px;" width="5" height="5" viewBox="0 0 5 5"><path d="M0 2.5h5" stroke="#1b3f91" stroke-width="1.2"/><path d="M2.5 0v5" stroke="#1b3f91" stroke-width="1.2"/></svg>
<div class="a" style="left:114px;top:431px;width:7px;height:1px;background:repeating-linear-gradient(90deg,#888 0 1px,transparent 1px 2px)"></div>
<div class="t" style="left:143px;top:425.69px;font-size:11px;color:#000;letter-spacing:-0.2px">Families</div>
<div class="a" style="left:105px;top:443px;width:9px;height:9px;background:linear-gradient(#fff,#e4e4e4);border:1px solid #8c8c8c;border-radius:1px"></div>
<svg class="a" style="left:107px;top:445px;" width="5" height="5" viewBox="0 0 5 5"><path d="M0 2.5h5" stroke="#1b3f91" stroke-width="1.2"/><path d="M2.5 0v5" stroke="#1b3f91" stroke-width="1.2"/></svg>
<div class="a" style="left:114px;top:447px;width:7px;height:1px;background:repeating-linear-gradient(90deg,#888 0 1px,transparent 1px 2px)"></div>
<div class="t" style="left:143px;top:441.69px;font-size:11px;color:#000;letter-spacing:-0.2px">Groups</div>
<div class="a" style="left:110px;top:463px;width:11px;height:1px;background:repeating-linear-gradient(90deg,#888 0 1px,transparent 1px 2px)"></div>
<div class="t" style="left:143px;top:457.69px;font-size:11px;color:#000;letter-spacing:-0.2px">Revit Links</div>
</div></div>
<svg class="a" style="left:121px;top:136px;" width="16" height="14" viewBox="0 0 16 14"><path d="M1 7c4-6 10-6 14 0c-4 6-10 6-14 0z" fill="#fff" stroke="#000" stroke-width="1.4"/><circle cx="8" cy="7" r="3" fill="#000"/><circle cx="7" cy="6" r="1" fill="#fff"/></svg>
<svg class="a" style="left:121px;top:375px;" width="16" height="15" viewBox="0 0 16 15"><rect x="0.5" y="0.5" width="15" height="14" fill="#fff" stroke="#000"/><path d="M3 4h3M8 4h5M3 8h3M8 8h5M3 11h3M8 11h5" stroke="#000" stroke-width="1.2"/></svg>
<svg class="a" style="left:121px;top:391px;" width="16" height="15" viewBox="0 0 16 15"><rect x="0.5" y="0.5" width="15" height="14" fill="#fff" stroke="#000"/><path d="M0.5 4h15M0.5 7.5h15M0.5 11h15M5 4v10.5M10.5 4v10.5" stroke="#000"/></svg>
<svg class="a" style="left:121px;top:408px;" width="16" height="13" viewBox="0 0 16 13"><rect x="0.5" y="0.5" width="15" height="12" fill="#fff" stroke="#000"/><path d="M11 0.5v12" stroke="#000" stroke-width="1.5"/></svg>
<svg class="a" style="left:122px;top:423px;" width="15" height="16" viewBox="0 0 15 16"><rect x="1" y="5" width="3" height="10" rx="1.5" fill="#fff" stroke="#000"/><path d="M7 3l7-2v10l-7 2z M10 2v10M7 8l7-2" fill="#fff" stroke="#000"/></svg>
<svg class="a" style="left:121px;top:439px;" width="16" height="16" viewBox="0 0 16 16"><rect x="0.5" y="0.5" width="15" height="15" fill="none" stroke="#000" stroke-dasharray="2 1"/><rect x="3" y="3" width="4" height="5" fill="none" stroke="#000"/><rect x="3" y="10" width="4" height="3" fill="none" stroke="#000"/><rect x="9" y="3" width="4" height="10" fill="none" stroke="#000"/></svg>
<svg class="a" style="left:121px;top:457px;" width="16" height="11" viewBox="0 0 16 11"><rect x="0.5" y="0.5" width="14" height="9" fill="#fff" stroke="#000"/></svg>
<div class="a" style="left:101px;top:963px;width:141px;height:3px;background:#e8e8e8"></div>
<div class="a" style="left:119px;top:963px;width:79px;height:3px;background:#f6f6f6;border:1px solid #8a8a8a;border-bottom:none;border-radius:2px 2px 0 0"></div>
<div class="a" style="left:0;top:114px;width:1074px;height:852px;overflow:hidden"><div class="a" style="left:0;top:-114px;width:1074px;height:966px">
<div class="a" style="left:252px;top:113px;width:822px;height:853px;background:#abb3bd"></div>
<div class="a" style="left:252px;top:113px;width:822px;height:1px;background:#5a5a5a"></div>
<div class="a" style="left:252px;top:113px;width:2px;height:853px;background:#5a5a5a"></div>
<div class="a" style="left:254px;top:113px;width:506px;height:433px;background:linear-gradient(#c3d1e1,#d8e4f1 40%,#d7e4f2);border:1px solid #444;border-radius:6px 6px 0 0;overflow:hidden"></div>
<div class="a" style="left:263px;top:143px;width:497px;height:1px;background:#6e6e6e"></div>
<div class="a" style="left:263px;top:143px;width:1px;height:394px;background:#6e6e6e"></div>
<svg class="a" style="left:264px;top:123px;" width="16" height="16" viewBox="0 0 16 16"><path d="M0.5 0.5h10l5 5v10h-15z" fill="#f4f4f4" stroke="#8a8a8a"/><path d="M10.5 0.5l5 5h-5z" fill="#b44ca6"/><rect x="0.5" y="7.5" width="15" height="8" fill="#b44ca6" stroke="#8a6a8a"/><text x="8" y="14.3" font-size="7" font-weight="bold" fill="#fff" text-anchor="middle" font-family="Liberation Sans">RVT</text></svg>
<div class="t" style="left:284px;top:125.12px;font-size:12.5px;color:#1f2a45;">Project1 - 3D View: {3D}</div>
<div class="a" style="left:264px;top:144px;width:496px;height:375px;background:#fff"></div>
<div class="a" style="left:264px;top:144px;width:50px;height:152px;background:#00a000"></div>
<div class="a" style="left:264px;top:295px;width:50px;height:1px;background:repeating-linear-gradient(90deg,#00a000 0 8px,#000 8px 17px)"></div>
<div class="a" style="left:264px;top:519px;width:496px;height:18px;background:#f0f0f0"></div>
<div class="t" style="left:288px;top:521.84px;font-size:12px;color:#000;">1 : 100</div>
<div class="a" style="left:761px;top:113px;width:329px;height:853px;background:linear-gradient(#c3d1e1,#d8e4f1 40%,#d7e4f2);border:1px solid #444;border-radius:6px 6px 0 0;overflow:hidden"></div>
<div class="a" style="left:770px;top:143px;width:330px;height:1px;background:#6e6e6e"></div>
<div class="a" style="left:770px;top:143px;width:1px;height:810px;background:#6e6e6e"></div>
<svg class="a" style="left:771px;top:123px;" width="16" height="16" viewBox="0 0 16 16"><path d="M0.5 0.5h10l5 5v10h-15z" fill="#f4f4f4" stroke="#8a8a8a"/><path d="M10.5 0.5l5 5h-5z" fill="#b44ca6"/><rect x="0.5" y="7.5" width="15" height="8" fill="#b44ca6" stroke="#8a6a8a"/><text x="8" y="14.3" font-size="7" font-weight="bold" fill="#fff" text-anchor="middle" font-family="Liberation Sans">RVT</text></svg>
<div class="t" style="left:791px;top:125.12px;font-size:12.5px;color:#1f2a45;">Project1 - Floor Plan: Piso 0</div>
<div class="a" style="left:771px;top:144px;width:303px;height:809px;background:#fff"></div>
<div class="a" style="left:771px;top:543px;width:303px;height:43px;background:#c6c6c6;border-top:1px solid #000;border-bottom:1px solid #000"></div>
<div class="a" style="left:771px;top:585px;width:303px;height:74px;background:#008000;border-bottom:1px solid #000"></div>
<div class="a" style="left:771px;top:659px;width:303px;height:11px;background:#00c800;border-bottom:1px solid #000"></div>
<div class="a" style="left:820px;top:672px;width:170px;height:67px;background:#00e6ff;border:1px solid #000"></div>
<div class="a" style="left:862px;top:672px;width:1px;height:67px;background:#000"></div>
<div class="a" style="left:904px;top:672px;width:1px;height:67px;background:#000"></div>
<div class="a" style="left:946px;top:672px;width:1px;height:67px;background:#000"></div>
<div class="a" style="left:771px;top:738px;width:303px;height:1px;background:#000"></div>
<div class="a" style="left:771px;top:953px;width:303px;height:13px;background:#f0f0f0"></div>
<div class="t" style="left:795px;top:955.84px;font-size:12px;color:#000;">1 : 100</div>
<div class="a" style="left:254px;top:546px;width:506px;height:434px;background:linear-gradient(#c3d1e1,#d8e4f1 40%,#d7e4f2);border:1px solid #444;border-radius:6px 6px 0 0;overflow:hidden"></div>
<div class="a" style="left:263px;top:576px;width:488px;height:1px;background:#6e6e6e"></div>
<div class="a" style="left:263px;top:576px;width:1px;height:377px;background:#6e6e6e"></div>
<svg class="a" style="left:264px;top:556px;" width="16" height="16" viewBox="0 0 16 16"><path d="M0.5 0.5h10l5 5v10h-15z" fill="#f4f4f4" stroke="#8a8a8a"/><path d="M10.5 0.5l5 5h-5z" fill="#b44ca6"/><rect x="0.5" y="7.5" width="15" height="8" fill="#b44ca6" stroke="#8a6a8a"/><text x="8" y="14.3" font-size="7" font-weight="bold" fill="#fff" text-anchor="middle" font-family="Liberation Sans">RVT</text></svg>
<div class="t" style="left:284px;top:558.22px;font-size:12.5px;color:#1f2a45;">Project1 - 3D View: {3D}</div>
<svg class="a" style="left:264px;top:577px;overflow:hidden" width="469" height="376" viewBox="0 0 469 376"><rect x="0" y="0" width="469" height="376" fill="#e3f5fc"/><polygon points="298.0,0.0 469.0,0.0 469.0,271.4 110.4,133.8 245.0,184.6 298.0,112.0" fill="#cdedfa"/><polygon points="245.0,184.6 298.0,112.0 336.0,0.0 0.0,0.0 0.0,376.0 88.0,376.0 88.0,123.0" fill="#e3f5fc"/><polygon points="0.0,220.5 39.5,234.5 96.0,159.0 96.0,376.0 0.0,376.0" fill="#fff"/><rect x="88" y="143" width="8" height="240" fill="#555" stroke="#000" stroke-width="1"/><rect x="96.5" y="148" width="4" height="240" fill="#e8f6fc"/><rect x="100.80000000000001" y="163" width="9" height="220" fill="#8a9ba5" stroke="#000" stroke-width="1"/><rect x="109.5" y="165" width="4" height="220" fill="#4e5e68" stroke="#000" stroke-width="1"/><polygon points="0.0,0.0 156.0,0.0 104.2,111.9 39.5,198.4 0.0,184.5" fill="#00a800"/><polyline points="0.0,184.5 39.5,198.4 104.2,111.9" fill="none" stroke="#000" stroke-width="1"/><polygon points="0.0,184.5 39.5,198.4 39.5,234.5 0.0,220.5" fill="#009c00" stroke="#000" stroke-width="1"/><polygon points="104.2,111.9 123.2,111.9 39.5,234.5 39.5,198.4" fill="#004d00" stroke="#000" stroke-width="1"/><polygon points="123.2,111.9 130.6,111.9 110.4,133.8 108.0,135.0" fill="#00502a" stroke="#000" stroke-width="0.8"/><polygon points="110.4,133.8 469.0,271.4 469.0,306.5 100.8,163.7 100.8,147.9" fill="#fff"/><line x1="110.4" y1="133.8" x2="469.0" y2="271.4" stroke="#000" stroke-width="1"/><line x1="100.8" y1="147.9" x2="469.0" y2="289.6" stroke="#000" stroke-width="1"/><line x1="100.8" y1="163.7" x2="469.0" y2="306.5" stroke="#000" stroke-width="2.2"/><line x1="100.8" y1="147.9" x2="110.4" y2="133.8" stroke="#000" stroke-width="1"/><line x1="100.8" y1="147.9" x2="100.8" y2="163.7" stroke="#000" stroke-width="1"/><line x1="96.7" y1="149.0" x2="96.7" y2="163.7" stroke="#000" stroke-width="1"/><line x1="298.0" y1="112.0" x2="245.0" y2="184.6" stroke="#000" stroke-width="1.3"/><line x1="469.0" y1="118.0" x2="380.8" y2="237.0" stroke="#000" stroke-width="1.3"/><rect x="230.5" y="216.79999999999995" width="2" height="159.20000000000005" fill="#000"/><rect x="235.0" y="218.79999999999995" width="7.5" height="159.20000000000005" fill="#8a9ba5" stroke="#000" stroke-width="0.9"/><rect x="365.5" y="266.6" width="2" height="109.39999999999998" fill="#000"/><rect x="370.0" y="268.6" width="7.5" height="109.39999999999998" fill="#8a9ba5" stroke="#000" stroke-width="0.9"/><ellipse cx="379" cy="119" rx="60" ry="36" fill="#c9cdd3" opacity="0.9"/><ellipse cx="379" cy="116" rx="48" ry="28" fill="#d2ecf6" stroke="#6a6a6a" stroke-width="1.5"/><defs><radialGradient id="csh" cx="0.5" cy="0.3" r="0.6"><stop offset="0.3" stop-color="#6a7a84"/><stop offset="1" stop-color="#d2ecf6" stop-opacity="0"/></radialGradient></defs><ellipse cx="384" cy="120" rx="38" ry="22" fill="url(#csh)"/><polygon points="346.0,111.0 384.0,129.0 404.0,111.0" fill="#c4c6cc"/><polygon points="384.0,129.0 404.0,111.0 426.0,111.0" fill="#b4b8be"/><line x1="384" y1="112" x2="384" y2="129" stroke="#555" stroke-width="0.8" stroke-dasharray="2 1.5"/><line x1="346" y1="111" x2="384" y2="129" stroke="#777" stroke-width="0.8"/><text x="335" y="152" font-size="16" font-weight="bold" fill="#6e6e78" stroke="#6e6e78" stroke-width="0.8" font-family="Liberation Sans" transform="rotate(-28 335 152)">S</text><text x="424" y="140" font-size="15" font-weight="bold" fill="#6e6e78" stroke="#6e6e78" stroke-width="0.8" font-family="Liberation Sans" transform="rotate(28 424 140)">E</text><rect x="81" y="251" width="43" height="120" rx="8" fill="#e0e0e0" fill-opacity="0.15" stroke="#999" stroke-opacity="0.45"/><circle cx="63.89999999999998" cy="311.29999999999995" r="63.5" fill="#e4e4e4" fill-opacity="0.3" stroke="#999" stroke-width="1"/><circle cx="63.89999999999998" cy="311.29999999999995" r="38" fill="#fff" fill-opacity="0.25" stroke="#999" stroke-width="1"/><line x1="90.8" y1="338.2" x2="108.8" y2="356.2" stroke="#999"/><line x1="37.0" y1="338.2" x2="19.0" y2="356.2" stroke="#999"/><line x1="37.0" y1="284.4" x2="19.0" y2="266.4" stroke="#999"/><line x1="90.8" y1="284.4" x2="108.8" y2="266.4" stroke="#999"/><line x1="25.899999999999977" y1="311.29999999999995" x2="101.89999999999998" y2="311.29999999999995" stroke="#999"/><line x1="63.89999999999998" y1="273.29999999999995" x2="63.89999999999998" y2="349.29999999999995" stroke="#999"/><text x="63.89999999999998" y="267.29999999999995" font-size="10" font-family="Liberation Sans" fill="#8c8c8c" text-anchor="middle" stroke="#8c8c8c" stroke-width="0.35">ZOOM</text><text x="63.89999999999998" y="366.29999999999995" font-size="10" font-family="Liberation Sans" fill="#8c8c8c" text-anchor="middle" stroke="#8c8c8c" stroke-width="0.35">PAN</text><text x="16.399999999999977" y="311.29999999999995" font-size="10" font-family="Liberation Sans" fill="#8c8c8c" text-anchor="middle" stroke="#8c8c8c" stroke-width="0.35" transform="rotate(-90 16.399999999999977 311.29999999999995)" dy="4">ORBIT</text><text x="112.89999999999998" y="311.29999999999995" font-size="10" font-family="Liberation Sans" fill="#5a5a5a" text-anchor="middle" stroke="#5a5a5a" stroke-width="0.35" transform="rotate(90 112.89999999999998 311.29999999999995)" dy="4">REWIND</text><text x="45.89999999999998" y="293.29999999999995" font-size="8" font-family="Liberation Sans" fill="#8c8c8c" text-anchor="middle" stroke="#8c8c8c" stroke-width="0.35" transform="rotate(-40 45.89999999999998 293.29999999999995)" dy="3">CENTER</text><text x="81.89999999999998" y="293.29999999999995" font-size="8" font-family="Liberation Sans" fill="#8c8c8c" text-anchor="middle" stroke="#8c8c8c" stroke-width="0.35" transform="rotate(40 81.89999999999998 293.29999999999995)" dy="3">WALK</text><text x="45.89999999999998" y="329.29999999999995" font-size="8" font-family="Liberation Sans" fill="#8c8c8c" text-anchor="middle" stroke="#8c8c8c" stroke-width="0.35" transform="rotate(50 45.89999999999998 329.29999999999995)" dy="3">LOOK</text><text x="80.89999999999998" y="330.29999999999995" font-size="8" font-family="Liberation Sans" fill="#8c8c8c" text-anchor="middle" stroke="#8c8c8c" stroke-width="0.35" transform="rotate(-50 80.89999999999998 330.29999999999995)" dy="3">UP/DOWN</text><text x="115" y="265" font-size="12" font-family="Liberation Sans" fill="#8c8c8c" text-anchor="middle">&#215;</text><circle cx="115" cy="363" r="5" fill="none" stroke="#aaa"/></svg>
<div class="a" style="left:733px;top:577px;width:18px;height:376px;background:#eaeaea;border-left:1px solid #ddd"></div>
<div class="a" style="left:734px;top:758px;width:16px;height:15px;background:linear-gradient(90deg,#f4f4f4,#d8d8d8);border:1px solid #9a9a9a;border-radius:2px"></div>
<svg class="a" style="left:738px;top:942px;" width="8" height="5" viewBox="0 0 8 5"><path d="M0 0h8l-4 4z" fill="#555"/></svg>
<div class="a" style="left:264px;top:953px;width:487px;height:13px;background:#f0f0f0"></div>
<div class="t" style="left:288.5px;top:957.34px;font-size:12px;color:#000;">1 : 100</div>
<div class="a" style="left:313px;top:106px;width:738px;height:583px;background:#b9d1ea;border:1px solid #1a1a1a;border-top:none"></div>
<div class="a" style="left:314px;top:106px;width:1px;height:582px;background:#e6eef7"></div>
<div class="a" style="left:1048px;top:106px;width:2px;height:582px;background:#8fd8f0"></div>
<div class="a" style="left:313px;top:688px;width:738px;height:1px;background:#000"></div>
<div class="a" style="left:314px;top:687px;width:736px;height:1px;background:#3ad0f0"></div>
<svg class="a" style="left:323px;top:108px;" width="16" height="16" viewBox="0 0 16 16"><path d="M0.5 0.5h10l5 5v10h-15z" fill="#f4f4f4" stroke="#8a8a8a"/><path d="M10.5 0.5l5 5h-5z" fill="#b44ca6"/><rect x="0.5" y="7.5" width="15" height="8" fill="#b44ca6" stroke="#8a6a8a"/><text x="8" y="14.3" font-size="7" font-weight="bold" fill="#fff" text-anchor="middle" font-family="Liberation Sans">RVT</text></svg>
<div class="t" style="left:343px;top:112.01px;font-size:11.8px;color:#1e1e1e;">Project1 - Section: Section 1</div>
<div class="a" style="left:953px;top:106px;width:27px;height:18px;background:linear-gradient(#dfe9f5,#c1d3e8);border:1px solid #7990ae;border-radius:0 0 3px 3px"></div>
<div class="a" style="left:960px;top:117px;width:12px;height:4px;background:#fff;border:1px solid #5a6a80"></div>
<div class="a" style="left:983px;top:106px;width:27px;height:18px;background:linear-gradient(#dfe9f5,#c1d3e8);border:1px solid #7990ae;border-radius:0 0 3px 3px"></div>
<div class="a" style="left:992px;top:111px;width:9px;height:7px;background:#fff;border:1px solid #5a6a80;border-top-width:2px"></div>
<div class="a" style="left:1013px;top:106px;width:28px;height:18px;background:linear-gradient(#e8a08a,#c9462c 60%,#b8391f);border:1px solid #5a1a10;border-radius:0 0 3px 3px"></div>
<svg class="a" style="left:1021px;top:108px;" width="11" height="9" viewBox="0 0 11 9"><path d="M1 0l9 9M10 0l-9 9" stroke="#fff" stroke-width="2.6"/><path d="M1 0l9 9M10 0l-9 9" stroke="#3a3a3a" stroke-width="0.6" opacity="0.3"/></svg>
<svg class="a" style="left:323px;top:128px;overflow:hidden" width="701" height="534" viewBox="0 0 701 534"><g shape-rendering="crispEdges"><rect x="0" y="0" width="701" height="534" fill="#fff"/><polygon points="0.0,272.0 675.0,0.0 701.0,0.0 701.0,81.7 273.9,253.6 260.1,259.5 246.4,231.4 208.5,248.2 208.5,280.8 0.0,364.0" fill="#00c000"/><polyline points="0.0,272.0 675.0,0.0" fill="none" stroke="#000" stroke-width="1.2"/><polyline points="0.0,364.0 208.5,280.8" fill="none" stroke="#000" stroke-width="1.2"/><polyline points="273.9,253.6 701.0,81.7" fill="none" stroke="#000" stroke-width="1.2"/><polyline points="208.5,280.8 208.5,248.2 246.4,231.4 260.1,259.5" fill="none" stroke="#000" stroke-width="1.2"/><line x1="251.39999999999998" y1="239.5" x2="701" y2="58.30000000000001" stroke="#000" stroke-width="3.2"/><line x1="251.39999999999998" y1="239.5" x2="701" y2="58.30000000000001" stroke="#10d0ff" stroke-width="1.6"/><polygon points="175.5,293.9 208.5,280.8 208.5,542.0 175.5,542.0" fill="#c6c6c6" stroke="#000" stroke-width="1.2"/><rect x="202" y="290.5" width="3" height="260" fill="#000"/><rect x="202.79999999999995" y="291.5" width="1.4" height="260" fill="#18c8f0"/><line x1="208.5" y1="290.5" x2="240.5" y2="290.5" stroke="#000" stroke-width="1.2"/><polygon points="240.5,269.2 260.1,261.0 273.9,254.8 273.9,542.0 240.5,542.0" fill="#c6c6c6" stroke="#000" stroke-width="1.2"/></g></svg>
<div class="a" style="left:322px;top:127px;width:702px;height:1px;background:#7a7a7a"></div>
<div class="a" style="left:322px;top:127px;width:1px;height:535px;background:#7a7a7a"></div>
<div class="a" style="left:1024px;top:128px;width:18px;height:534px;background:linear-gradient(90deg,#e6e6e6,#f2f2f2 40%,#ebebeb)"></div>
<svg class="a" style="left:1029px;top:134px;" width="8" height="5" viewBox="0 0 8 5"><path d="M0 4h8l-4-4z" fill="#333"/></svg>
<div class="a" style="left:1025px;top:387px;width:16px;height:16px;background:linear-gradient(90deg,#f6f6f6,#dadada);border:1px solid #9a9a9a;border-radius:2px"></div>
<svg class="a" style="left:1029px;top:651px;" width="8" height="5" viewBox="0 0 8 5"><path d="M0 0h8l-4 4z" fill="#333"/></svg>
<div class="a" style="left:323px;top:662px;width:224px;height:18px;background:#f0f0f0"></div>
<div class="t" style="left:347.5px;top:665.27px;font-size:11.5px;color:#000;">1 : 100</div>
<div class="a" style="left:547px;top:662px;width:477px;height:17px;background:linear-gradient(#e6e6e6,#f2f2f2 40%,#ebebeb)"></div>
<svg class="a" style="left:553px;top:667px;" width="5" height="8" viewBox="0 0 5 8"><path d="M4 0v8l-4-4z" fill="#333"/></svg>
<svg class="a" style="left:1013px;top:667px;" width="5" height="8" viewBox="0 0 5 8"><path d="M0 0v8l4-4z" fill="#333"/></svg>
<div class="a" style="left:778px;top:663px;width:15px;height:16px;background:linear-gradient(#f6f6f6,#d6d6d6);border:1px solid #9a9a9a;border-radius:2px"></div>
<div class="a" style="left:1024px;top:662px;width:18px;height:18px;background:#f0f0f0"></div>
<svg class="a" style="left:1030px;top:668px;" width="9" height="9" viewBox="0 0 9 9"><path d="M8 1v1M6 3v1M8 3v1M4 5v1M6 5v1M8 5v1M2 7v1M4 7v1M6 7v1M8 7v1" stroke="#999"/></svg>
</div></div>
<div class="a" style="left:252px;top:113px;width:822px;height:1px;background:#5a5a5a"></div>
<div class="a" style="left:252px;top:113px;width:2px;height:853px;background:#5a5a5a"></div>
<svg class="a" style="left:406px;top:665.5px;" width="11" height="11" viewBox="0 0 11 11"><rect x="0.5" y="0.5" width="10" height="10" fill="#fff" stroke="#000" stroke-width="1.3"/></svg>
<svg class="a" style="left:424px;top:665px;" width="16" height="12" viewBox="0 0 16 12"><path d="M1 4l7-3 7 3v4l-7 3-7-3z" fill="#a8d4f4" stroke="#2a6ab4"/><path d="M1 4l7 3 7-3M8 7v4" fill="none" stroke="#2a6ab4"/></svg>
<svg class="a" style="left:445px;top:665px;" width="13" height="12" viewBox="0 0 13 12"><path d="M2 11c-2-4 0-9 9-10c0 6-3 10-9 10z" fill="#fff" stroke="#999"/><path d="M2 11c3 0 7 0 10-1" stroke="#bbb" stroke-width="2"/></svg>
<svg class="a" style="left:466px;top:665px;" width="13" height="12" viewBox="0 0 13 12"><path d="M3 0v9h10M0 3h10v9" stroke="#0a0ad8" stroke-width="2.2" fill="none"/></svg>
<svg class="a" style="left:487px;top:665px;" width="13" height="12" viewBox="0 0 13 12"><path d="M3 0v9h10M0 3h10v9" stroke="#0a0ad8" stroke-width="2.2" fill="none"/><circle cx="10" cy="2.5" r="2.5" fill="#ee0" stroke="#777" stroke-width="0.6"/></svg>
<svg class="a" style="left:506px;top:665px;" width="16" height="11" viewBox="0 0 16 11"><path d="M0 4c2 0 3 1 4 3M6 6c2-1 4-1 5 0" stroke="#333" fill="none"/><ellipse cx="8" cy="7" rx="3" ry="2.5" fill="#cde" stroke="#333"/><ellipse cx="13" cy="5" rx="2.6" ry="2.3" fill="#cde" stroke="#333"/></svg>
<svg class="a" style="left:530px;top:664px;" width="9" height="13" viewBox="0 0 9 13"><circle cx="4.5" cy="4.5" r="4" fill="#dde8f0" stroke="#777"/><path d="M3 9h3v3h-3z" fill="#999"/></svg>
<svg class="a" style="left:347px;top:955px;" width="11" height="11" viewBox="0 0 11 11"><rect x="0.5" y="0.5" width="10" height="10" fill="#fff" stroke="#000" stroke-width="1.2"/><rect x="2" y="2" width="3.5" height="3.5" fill="#000"/><rect x="5.5" y="5.5" width="3.5" height="3.5" fill="#000"/></svg>
<svg class="a" style="left:365px;top:955px;" width="16" height="12" viewBox="0 0 16 12"><path d="M1 4l7-3 7 3v4l-7 3-7-3z" fill="#a8d4f4" stroke="#2a6ab4"/><path d="M1 4l7 3 7-3M8 7v4" fill="none" stroke="#2a6ab4"/></svg>
<svg class="a" style="left:386px;top:955px;" width="13" height="12" viewBox="0 0 13 12"><path d="M2 11c-2-4 0-9 9-10c0 6-3 10-9 10z" fill="#fff" stroke="#999"/><path d="M2 11c3 0 7 0 10-1" stroke="#bbb" stroke-width="2"/></svg>
<svg class="a" style="left:406px;top:955px;" width="15" height="11" viewBox="0 0 15 11"><ellipse cx="7" cy="6" rx="5" ry="4.5" fill="#fff" stroke="#000"/><path d="M2 5c-2-2-2 2 0 3M12 4l3-2" stroke="#000" fill="none"/><path d="M5 2h4" stroke="#000" stroke-width="1.5"/></svg>
<svg class="a" style="left:428px;top:955px;" width="13" height="12" viewBox="0 0 13 12"><path d="M3 0v9h10M0 3h10v9" stroke="#0a0ad8" stroke-width="2.2" fill="none"/><path d="M0 12L12 0" stroke="#c00" stroke-width="1.3"/></svg>
<svg class="a" style="left:450px;top:955px;" width="13" height="12" viewBox="0 0 13 12"><path d="M3 0v9h10M0 3h10v9" stroke="#0a0ad8" stroke-width="2.2" fill="none"/><circle cx="10" cy="2.5" r="2.5" fill="#ee0" stroke="#777" stroke-width="0.6"/></svg>
<svg class="a" style="left:468px;top:955px;" width="16" height="11" viewBox="0 0 16 11"><path d="M0 4c2 0 3 1 4 3M6 6c2-1 4-1 5 0" stroke="#333" fill="none"/><ellipse cx="8" cy="7" rx="3" ry="2.5" fill="#cde" stroke="#333"/><ellipse cx="13" cy="5" rx="2.6" ry="2.3" fill="#cde" stroke="#333"/></svg>
<svg class="a" style="left:492px;top:954px;" width="9" height="13" viewBox="0 0 9 13"><circle cx="4.5" cy="4.5" r="4" fill="#dde8f0" stroke="#777"/><path d="M3 9h3v3h-3z" fill="#999"/></svg>
<svg class="a" style="left:514px;top:957px;" width="5" height="8" viewBox="0 0 5 8"><path d="M4 0v8l-4-4z" fill="#333"/></svg>
<div class="a" style="left:522px;top:953px;width:211px;height:13px;background:#e8e8e8"></div>
<div class="a" style="left:612px;top:956px;width:16px;height:12px;background:linear-gradient(#f6f6f6,#d6d6d6);border:1px solid #9a9a9a;border-radius:2px"></div>
<svg class="a" style="left:723px;top:957px;" width="5" height="8" viewBox="0 0 5 8"><path d="M0 0v8l4-4z" fill="#333"/></svg>
<svg class="a" style="left:853px;top:955px;" width="11" height="11" viewBox="0 0 11 11"><rect x="0.5" y="0.5" width="10" height="10" fill="#fff" stroke="#000" stroke-width="1.2"/><path d="M2 2h1v1h-1zM4 2h1v1h-1zM6 2h1v1h-1zM8 2h1v1h-1zM3 3h1v1h-1zM5 3h1v1h-1zM7 3h1v1h-1zM2 4h1v1h-1zM4 4h1v1h-1zM6 4h1v1h-1zM8 4h1v1h-1zM3 5h1v1h-1zM5 5h1v1h-1zM7 5h1v1h-1zM2 6h1v1h-1zM4 6h1v1h-1zM6 6h1v1h-1zM8 6h1v1h-1zM3 7h1v1h-1zM5 7h1v1h-1zM7 7h1v1h-1zM2 8h1v1h-1zM4 8h1v1h-1zM6 8h1v1h-1zM8 8h1v1h-1z" fill="#000"/></svg>
<svg class="a" style="left:871px;top:955px;" width="16" height="12" viewBox="0 0 16 12"><path d="M1 4l7-3 7 3v4l-7 3-7-3z" fill="#a8d4f4" stroke="#2a6ab4"/><path d="M1 4l7 3 7-3M8 7v4" fill="none" stroke="#2a6ab4"/></svg>
<svg class="a" style="left:893px;top:955px;" width="13" height="12" viewBox="0 0 13 12"><path d="M2 11c-2-4 0-9 9-10c0 6-3 10-9 10z" fill="#fff" stroke="#999"/><path d="M2 11c3 0 7 0 10-1" stroke="#bbb" stroke-width="2"/></svg>
<svg class="a" style="left:914px;top:955px;" width="13" height="12" viewBox="0 0 13 12"><path d="M3 0v9h10M0 3h10v9" stroke="#0a0ad8" stroke-width="2.2" fill="none"/><path d="M0 12L12 0" stroke="#c00" stroke-width="1.3"/></svg>
<svg class="a" style="left:935px;top:955px;" width="13" height="12" viewBox="0 0 13 12"><path d="M3 0v9h10M0 3h10v9" stroke="#0a0ad8" stroke-width="2.2" fill="none"/><circle cx="10" cy="2.5" r="2.5" fill="#ee0" stroke="#777" stroke-width="0.6"/></svg>
<svg class="a" style="left:954px;top:955px;" width="16" height="11" viewBox="0 0 16 11"><rect x="0.5" y="0.5" width="15" height="10" fill="#dde" stroke="#333"/><path d="M0 4c2 0 3 1 4 3M6 6c2-1 4-1 5 0" stroke="#333" fill="none"/><ellipse cx="8" cy="7" rx="3" ry="2.5" fill="#cde" stroke="#333"/><ellipse cx="13" cy="5" rx="2.6" ry="2.3" fill="#cde" stroke="#333"/></svg>
<svg class="a" style="left:979px;top:954px;" width="9" height="13" viewBox="0 0 9 13"><circle cx="4.5" cy="4.5" r="4" fill="#dde8f0" stroke="#777"/><path d="M3 9h3v3h-3z" fill="#999"/></svg>
<div class="a" style="left:995px;top:953px;width:79px;height:13px;background:#e8e8e8"></div>
<svg class="a" style="left:1000px;top:957px;" width="5" height="8" viewBox="0 0 5 8"><path d="M4 0v8l-4-4z" fill="#333"/></svg>
<div class="a" style="left:733px;top:953px;width:18px;height:13px;background:#f0f0f0"></div>
<svg class="a" style="left:741px;top:956px;" width="9" height="9" viewBox="0 0 9 9"><path d="M7 1v1M5 3v1M7 3v1M3 5v1M5 5v1M7 5v1" stroke="#aaa"/></svg>
</body></html>
